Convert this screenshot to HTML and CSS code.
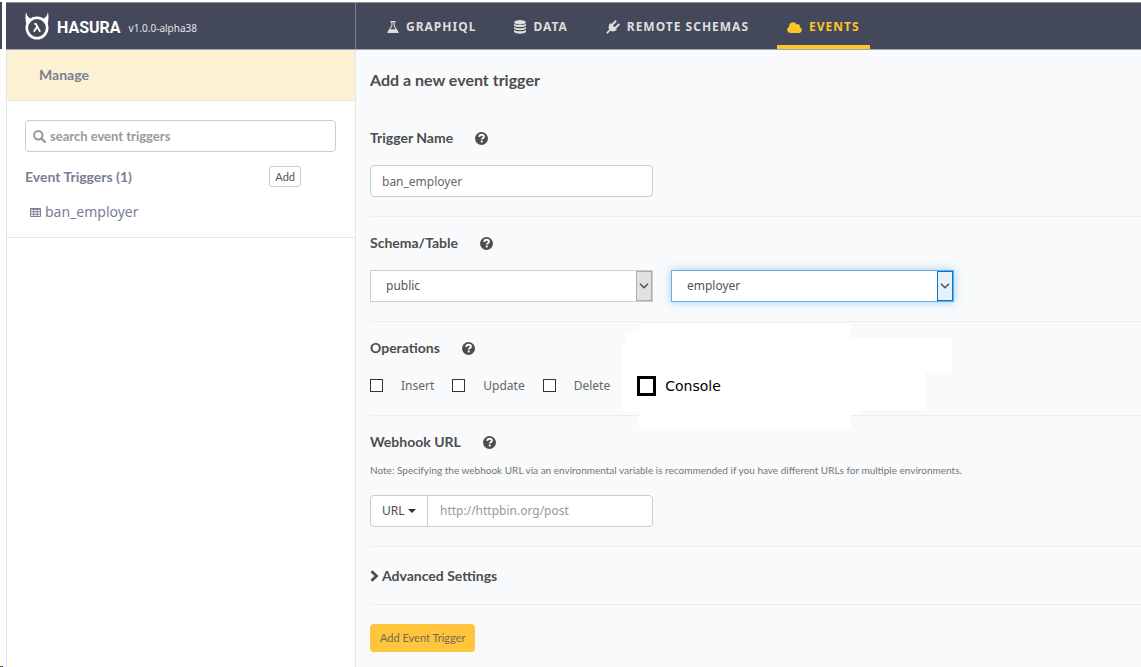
FILE: index.html
```html
<!DOCTYPE html>
<html lang="en">
<head>
    <meta charset="UTF-8">
    <meta name="viewport" content="width=device-width, initial-scale=1.0">
    <title>Add Event Trigger | Hasura</title>
    <link rel="stylesheet" href="styles.css">
</head>
<body>
    <!-- Shared icons -->
    <svg class="sprite" aria-hidden="true">
        <symbol id="help" viewBox="0 0 12 12">
            <circle cx="6" cy="6" r="6" fill="currentColor"/>
            <path d="M3.900 4.500C4 3.300 4.800 2.600 6.100 2.600s2.100.7 2.100 1.700c0 1.400-1.900 1.400-1.900 2.700" fill="none" stroke="#f8fafb" stroke-width="1.800"/>
            <rect x="5.300" y="7.900" width="1.900" height="1.700" fill="#f8fafb"/>
        </symbol>
        <symbol id="chevron" viewBox="0 0 10 6">
            <path d="M1 .8l4 4 4-4" fill="none" stroke="currentColor" stroke-width="1.400"/>
        </symbol>
    </svg>

    <div class="page">
        <div class="edge"><div class="edge-bar"></div></div>

        <aside class="sidebar">
            <div class="brand">
                <svg class="logo" viewBox="0 0 24 28" aria-hidden="true">
                    <path d="M1 0C.2 4 .2 9 1.800 13L7 7.500C3.800 6 1.800 4 1 0zM23 0c.8 4 .8 9-.8 13L17 7.500C20.200 6 22.200 4 23 0z" fill="#fff"/>
                    <circle cx="12" cy="16" r="10.200" fill="none" stroke="#fff" stroke-width="2.600"/>
                    <path d="M9.300 11.800h1.500l4.300 8M12 14.800L8.900 19.800" fill="none" stroke="#fff" stroke-width="1.800"/>
                </svg>
                <span class="brand-name">HASURA</span>
                <span class="version">v1.0.0-alpha38</span>
            </div>
            <a class="manage" href="#">Manage</a>
            <div class="triggers">
                <div class="search">
                    <svg width="13" height="13" viewBox="0 0 13 13" aria-hidden="true">
                        <circle cx="5.300" cy="5.300" r="4.200" fill="none" stroke="currentColor" stroke-width="2"/>
                        <path d="M8.400 8.400l3.600 3.600" stroke="currentColor" stroke-width="2.200" stroke-linecap="round"/>
                    </svg>
                    <input type="text" placeholder="search event triggers" aria-label="search event triggers">
                </div>
                <div class="triggers-head">
                    <h3>Event Triggers (1)</h3>
                    <button class="btn-small" type="button">Add</button>
                </div>
                <a class="trigger-link" href="#">
                    <svg width="11" height="9" viewBox="0 0 11 9" aria-hidden="true">
                        <path d="M.5.500h10v8H.5zM.5 1.300h10M.5 3.700h10M.5 6.200h10M3.800.5v8M7.200.5v8" fill="none" stroke="currentColor"/>
                    </svg>
                    ban_employer
                </a>
            </div>
        </aside>

        <div class="content">
            <nav class="nav">
                <a href="#">
                    <svg width="12" height="12" viewBox="0 0 12 12" aria-hidden="true">
                        <path d="M3.500 0h5v1.200h-.8v3.500L11.600 11c.3.600 0 1-.6 1H1c-.6 0-.9-.4-.6-1l3.900-6.300V1.200h-.8zM5.400 1.200V5L3.300 8.200h5.400L6.600 5V1.200z" fill="currentColor" fill-rule="evenodd"/>
                    </svg>
                    GRAPHIQL
                </a>
                <a href="#">
                    <svg width="12" height="14" viewBox="0 0 12 14" aria-hidden="true">
                        <ellipse cx="6" cy="2.200" rx="6" ry="2.200" fill="currentColor"/>
                        <path d="M0 3.700c2 1.700 10 1.700 12 0v1.700c-1 2.200-11 2.200-12 0zM0 6.900c2 1.700 10 1.700 12 0v1.700c-1 2.200-11 2.200-12 0zM0 10.100c2 1.700 10 1.700 12 0v1.700c-1 2.600-11 2.600-12 0z" fill="currentColor"/>
                    </svg>
                    DATA
                </a>
                <a href="#">
                    <svg width="14" height="14" viewBox="0 0 14 14" aria-hidden="true">
                        <path d="M4.500 3.100l6.400 6.400c-1.800 2-4.400 2.400-6.600 1.300L1.800 13.400c-.9.800-2-.3-1.200-1.200l2.600-2.600c-1.100-2.200-.7-4.700 1.300-6.500z" fill="currentColor"/>
                        <path d="M6.300 4.700l3.300-3.400M9.500 7.800l3.300-3.300" stroke="currentColor" stroke-width="2" stroke-linecap="round"/>
                    </svg>
                    REMOTE SCHEMAS
                </a>
                <a class="active" href="#">
                    <svg width="15" height="11" viewBox="0 0 15 11" aria-hidden="true">
                        <path d="M3.300 11a3.300 3.300 0 0 1-1.200-6.300A4 4 0 0 1 9.600 2.500a2.200 2.200 0 0 1 3.200 2.700A3 3 0 0 1 12 11z" fill="currentColor"/>
                    </svg>
                    EVENTS
                </a>
            </nav>

            <form class="form">
                <h2>Add a new event trigger</h2>

                <section>
                    <div class="heading">
                        <label for="triggerName">Trigger Name</label>
                        <svg class="help"><use href="#help"/></svg>
                    </div>
                    <input class="field" id="triggerName" type="text" value="ban_employer">
                </section>

                <section>
                    <div class="heading">
                        <label for="schema">Schema/Table</label>
                        <svg class="help"><use href="#help"/></svg>
                    </div>
                    <div class="selects">
                        <div class="select">
                            <select id="schema"><option>public</option></select>
                            <span class="arrow"><svg><use href="#chevron"/></svg></span>
                        </div>
                        <div class="select focused">
                            <select aria-label="Table"><option>employer</option></select>
                            <span class="arrow"><svg><use href="#chevron"/></svg></span>
                        </div>
                    </div>
                </section>

                <section class="operations">
                    <div class="patch"></div>
                    <div class="heading">
                        <span>Operations</span>
                        <svg class="help"><use href="#help"/></svg>
                    </div>
                    <div class="checks">
                        <label><input type="checkbox">Insert</label>
                        <label><input type="checkbox">Update</label>
                        <label><input type="checkbox">Delete</label>
                        <label class="console"><input type="checkbox">Console</label>
                    </div>
                </section>

                <section>
                    <div class="heading with-note">
                        <label for="webhook">Webhook URL</label>
                        <svg class="help"><use href="#help"/></svg>
                    </div>
                    <p class="note">Note: Specifying the webhook URL via an environmental variable is recommended if you have different URLs for multiple environments.</p>
                    <div class="group">
                        <button type="button">URL<span class="caret"></span></button>
                        <input id="webhook" type="text" placeholder="http://httpbin.org/post">
                    </div>
                </section>

                <section class="advanced">
                    <button type="button">
                        <svg width="9" height="12" viewBox="0 0 9 12" aria-hidden="true">
                            <path d="M1.500 1.300L6.500 6l-5 4.700" fill="none" stroke="currentColor" stroke-width="2.800"/>
                        </svg>
                        Advanced Settings
                    </button>
                </section>

                <button class="btn-submit" type="submit">Add Event Trigger</button>
            </form>
        </div>
    </div>
</body>
</html>
```

FILE: styles.css
```css
* {
    box-sizing: border-box;
}
body {
    margin: 0;
    font-family: "Noto Sans", sans-serif;
    font-size: 14px;
    line-height: 20px;
    color: #4d4d4d;
    background: #fff;
}
h2, h3, p {
    margin: 0;
}
a {
    text-decoration: none;
}
button, input, select {
    font: inherit;
    color: inherit;
}
svg {
    flex: none;
}
.sprite {
    display: none;
}
.page {
    display: grid;
    grid-template-columns: 6px 350px 1fr;
    min-height: 100vh;
    padding-top: 2px;
}

/* Window edge */
.edge {
    background: linear-gradient(90deg, #f00 1px, #0a0 1px 2px, #00f 2px) left bottom / 3px 1px no-repeat;
}
.edge-bar {
    width: 2px;
    height: 47px;
    background: #43495a;
}

/* Sidebar */
.sidebar {
    border-left: 1px solid #e5e5e5;
    border-right: 1px solid #e5e5e5;
}
.brand {
    display: flex;
    align-items: center;
    height: 48px;
    margin: 0 -1px;
    padding-left: 19px;
    background: #43495a;
    border-top: 1px solid #8e929e;
    border-bottom: 1px solid #a0a4ae;
    border-right: 1px solid #788095;
    color: #fff;
}
.logo {
    width: 24px;
    height: 28px;
}
.brand-name {
    margin: 4px 8px 0;
    font-family: Roboto, sans-serif;
    font-size: 16px;
    font-weight: bold;
}
.version {
    margin-top: 4px;
    font-size: 10px;
    color: #e3e4e7;
}
.manage {
    display: block;
    height: 51px;
    padding: 15px 32px;
    background: #fdf1d3;
    border-bottom: 1px solid #e5e5e5;
    font-family: Lato, sans-serif;
    font-weight: bold;
    color: #788095;
}
.triggers {
    padding: 19px 19px 15px 18px;
    border-bottom: 1px solid #e5e5e5;
    color: #788095;
}
.search {
    display: flex;
    align-items: center;
    gap: 4px;
    height: 32px;
    padding-left: 7px;
    border: 1px solid #ccc;
    border-radius: 4px;
    color: #979797;
}
.search input {
    flex: 1;
    min-width: 0;
    padding: 0;
    border: 0;
    outline: 0;
    background: none;
    font-family: Lato, sans-serif;
    font-size: 13px;
    font-weight: bold;
}
.triggers-head {
    display: flex;
    align-items: center;
    justify-content: space-between;
    margin: 14px 35px 15px 0;
}
.triggers-head h3 {
    font-family: Lato, sans-serif;
    font-size: 14px;
}
.btn-small {
    height: 21px;
    padding: 0 5px;
    background: #fff;
    border: 1px solid #ccc;
    border-radius: 3px;
    font-family: Lato, sans-serif;
    font-size: 11px;
    line-height: 18px;
    color: #555;
}
.trigger-link {
    display: flex;
    align-items: center;
    gap: 4px;
    padding-left: 5px;
    color: #788095;
}

/* Top navigation */
.nav {
    display: flex;
    height: 48px;
    padding-left: 21px;
    gap: 18px;
    background: #43495a;
    border-top: 1px solid #8e929e;
    border-bottom: 1px solid #a0a4ae;
}
.nav a {
    display: flex;
    align-items: center;
    gap: 7px;
    padding: 6px 10px 0;
    border-bottom: 4px solid transparent;
    font-size: 12px;
    font-weight: bold;
    letter-spacing: 1px;
    color: #dedede;
}
.nav .active {
    color: #ffc627;
    border-color: #ffc627;
}

/* Form */
.content {
    background: #f8fafb;
}
.form {
    padding: 19px 0 15px 14px;
}
.form h2 {
    margin-bottom: 21px;
    font-family: Lato, sans-serif;
    font-size: 16px;
    line-height: 22px;
}
.form section {
    padding: 16px 0 19px;
    border-bottom: 1px solid #ebedee;
}
.heading {
    display: flex;
    align-items: center;
    gap: 22px;
    margin-bottom: 17px;
    font-family: Lato, sans-serif;
    font-weight: bold;
}
.help {
    width: 13px;
    height: 13px;
}
.field {
    display: block;
    width: 283px;
    height: 32px;
    padding: 0 11px;
    background: #fff;
    border: 1px solid #ccc;
    border-radius: 4px;
    font-size: 12px;
    color: #666;
}
.selects {
    display: flex;
    gap: 18px;
}
.select {
    position: relative;
    width: 283px;
}
.select select {
    display: block;
    width: 100%;
    height: 32px;
    padding: 0 15px;
    appearance: none;
    background: #fff;
    border: 1px solid #ccc;
    border-radius: 0;
    font-size: 12px;
    color: #555;
}
.arrow {
    position: absolute;
    top: 1px;
    right: 1px;
    bottom: 1px;
    display: flex;
    align-items: center;
    justify-content: center;
    width: 16px;
    background: #e1e1e1;
    border: 1px solid #adadad;
    pointer-events: none;
}
.arrow svg {
    width: 10px;
    height: 6px;
}
.focused select {
    border-color: #66afe9;
    box-shadow: 0 0 8px rgba(102, 175, 233, 0.6);
}
.focused .arrow {
    background: #e5f1fb;
    border-color: #0078d7;
}

/* Operations */
.operations {
    position: relative;
}
.patch {
    position: absolute;
    top: 2px;
    left: 252px;
    width: 330px;
    height: 105px;
    background: #fff;
    clip-path: polygon(18px 0, 229px 0, 229px 14px, 330px 14px, 330px 48px, 303px 48px, 303px 86px, 240px 86px, 240px 91px, 229px 91px, 229px 105px, 17px 105px, 17px 88px, 0 88px, 0 20px, 4px 20px, 4px 8px, 18px 8px);
}
.checks {
    position: relative;
    display: flex;
    gap: 18px;
    height: 21px;
}
.checks label {
    display: flex;
    align-items: center;
    gap: 18px;
    font-size: 12px;
    color: #666;
}
.checks input {
    width: 13px;
    height: 13px;
    margin: 0;
    appearance: none;
    background: #fff;
    border: 1px solid #333;
}
.checks .console {
    gap: 9px;
    margin-left: 9px;
    font-family: "DejaVu Sans", sans-serif;
    font-size: 14px;
    color: #000;
}
.checks .console input {
    width: 19px;
    height: 20px;
    border: 3px solid #000;
}

/* Webhook */
.with-note {
    margin-bottom: 10px;
}
.note {
    margin-bottom: 17px;
    font-family: Lato, sans-serif;
    font-size: 10px;
    line-height: 16px;
    color: #767676;
}
.group {
    display: flex;
    width: 283px;
    height: 32px;
    background: #fff;
    border: 1px solid #ccc;
    border-radius: 4px;
}
.group button {
    display: flex;
    align-items: center;
    gap: 3px;
    width: 57px;
    padding: 0 11px;
    background: none;
    border: 0;
    border-right: 1px solid #ccc;
    font-size: 12px;
}
.caret {
    border: 4px solid transparent;
    border-top-color: #333;
    border-bottom: 0;
}
.group input {
    flex: 1;
    min-width: 0;
    padding: 0 12px;
    background: none;
    border: 0;
    font-size: 12px;
}
input::placeholder {
    color: #999;
}
.form .advanced {
    padding: 19px 0 18px;
}
.advanced button {
    display: flex;
    align-items: center;
    gap: 3px;
    padding: 0;
    background: none;
    border: 0;
    font-family: Lato, sans-serif;
    font-weight: bold;
}
.btn-submit {
    height: 28px;
    margin-top: 19px;
    padding: 0 10px;
    background: #ffc53d;
    border: 0;
    border-radius: 4px;
    font-family: Lato, sans-serif;
    font-size: 11px;
    color: #766b4d;
}
```
